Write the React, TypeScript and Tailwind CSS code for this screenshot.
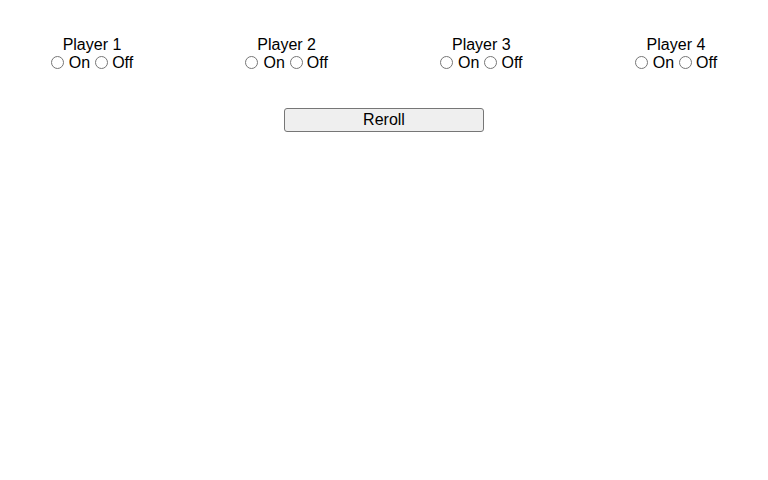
const players = ["Player 1", "Player 2", "Player 3", "Player 4"];

function PlayerToggle({ name }: { name: string }) {
  return (
    <div className="flex w-[120px] flex-col items-center">
      <div className="leading-[18px]">{name}</div>
      <div className="flex items-center leading-[18px]">
        <input type="radio" name={name} className="mb-[2px] size-[13px]" />
        <span className="ml-[5px]">On</span>
        <input type="radio" name={name} className="mb-[2px] ml-[5px] size-[13px]" />
        <span className="ml-[4px]">Off</span>
      </div>
    </div>
  );
}

export default function App() {
  return (
    <div className="min-h-[480px] bg-white font-['Liberation_Sans',Arial,sans-serif] text-base text-black">
      <div className="flex justify-between px-8 pt-[36px]">
        {players.map((p) => (
          <PlayerToggle key={p} name={p} />
        ))}
      </div>
      <div className="mt-[36px] flex justify-center">
        <button className="h-6 w-[200px] rounded-[3px] border border-[#767676] bg-[#efefef] text-base leading-none text-black">
          Reroll
        </button>
      </div>
    </div>
  );
}
